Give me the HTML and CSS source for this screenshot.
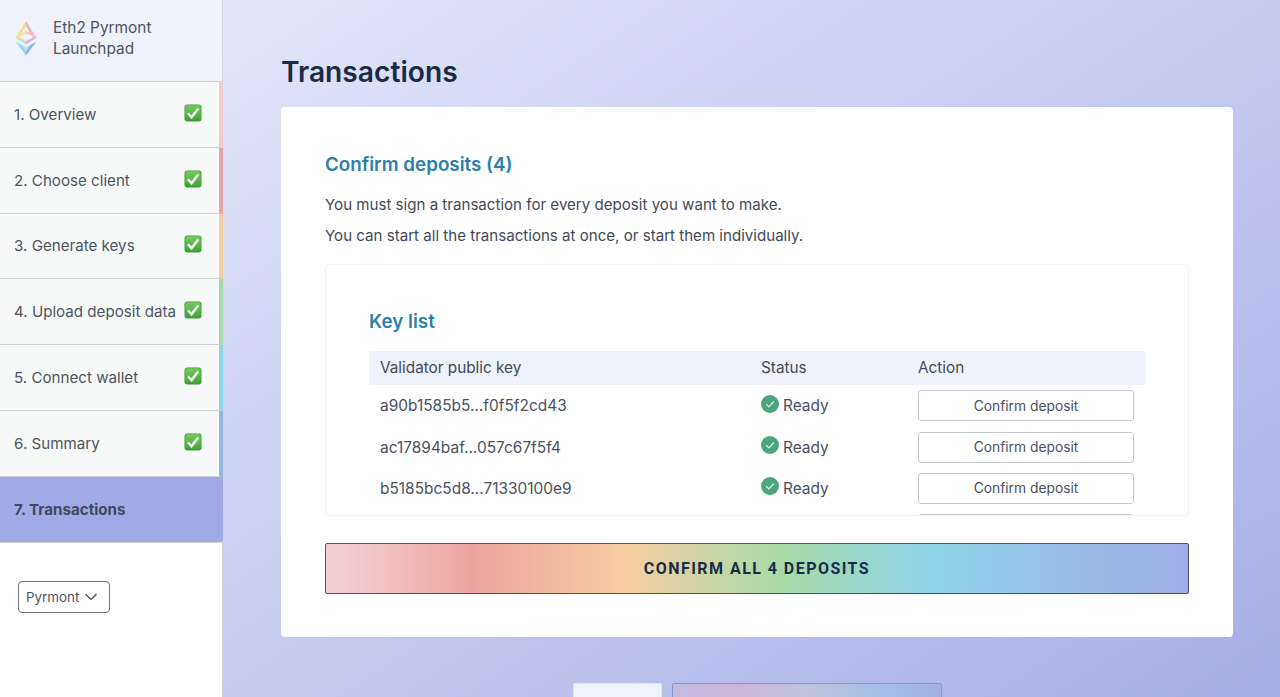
FILE: index.html
```html
<!DOCTYPE html>
<html lang="en">
<head>
<meta charset="utf-8">
<title>Transactions</title>
<link rel="stylesheet" href="styles.css">
</head>
<body>
<svg class="defs" width="0" height="0" aria-hidden="true">
  <defs>
    <linearGradient id="tickfill" x1="0" y1="0" x2="0" y2="1">
      <stop offset="0" stop-color="#74cc5f"/>
      <stop offset="1" stop-color="#43a43a"/>
    </linearGradient>
    <symbol id="tick" viewBox="0 0 18 18">
      <rect x="0.5" y="0.5" width="17" height="17" rx="3" fill="#3f9a37"/>
      <rect x="1.3" y="1.3" width="15.4" height="14.8" rx="2.4" fill="url(#tickfill)"/>
      <path d="M4 9.2l3.5 4L14.2 4.4" fill="none" stroke="#f4f7f2" stroke-width="2.5"/>
    </symbol>
    <symbol id="ready" viewBox="0 0 18 18">
      <circle cx="9" cy="9" r="9" fill="#4ca57d"/>
      <path d="M5.2 9.2l2.7 2.7 5-5.4" fill="none" stroke="#e4f3ec" stroke-width="1.2"/>
    </symbol>
  </defs>
</svg>
<div class="app">
  <aside class="sidebar">
    <header class="brand">
      <svg class="logo" width="24" height="36" viewBox="0 0 24 36" aria-hidden="true">
        <path d="M12 1L1.5 18 12 24.2 22.5 18z" fill="#f4f1f4"/>
        <path d="M12 1L1.5 18 5 17.8 12 6z" fill="#f8dc8c"/>
        <path d="M12 1L22.5 18 19 17.8 12 6z" fill="#f3b6ae"/>
        <path d="M1.5 18L12 13.5V11L3.5 15z" fill="#f7dfa0"/>
        <path d="M22.5 18L12 13.5V11L20.5 15z" fill="#f0c2cf"/>
        <path d="M1.5 18L12 24.2V21L5 17.8z" fill="#bfe3b2"/>
        <path d="M22.5 18L12 24.2V21L19 17.8z" fill="#c8b8ea"/>
        <path d="M1.5 21.5L12 27.6V35.5z" fill="#8fd6ea"/>
        <path d="M22.5 21.5L12 27.6V35.5z" fill="#8fb2ea"/>
        <path d="M7 24.6L12 27.6 17 24.6 12 31.5z" fill="#b4e3ee"/>
      </svg>
      <span class="brand-name">Eth2 Pyrmont<br>Launchpad</span>
    </header>
    <nav class="steps">
      <div class="step step-1"><span>1. Overview</span><svg class="tick"><use href="#tick"/></svg></div>
      <div class="step step-2"><span>2. Choose client</span><svg class="tick"><use href="#tick"/></svg></div>
      <div class="step step-3"><span>3. Generate keys</span><svg class="tick"><use href="#tick"/></svg></div>
      <div class="step step-4"><span>4. Upload deposit data</span><svg class="tick"><use href="#tick"/></svg></div>
      <div class="step step-5"><span>5. Connect wallet</span><svg class="tick"><use href="#tick"/></svg></div>
      <div class="step step-6"><span>6. Summary</span><svg class="tick"><use href="#tick"/></svg></div>
      <div class="step step-active"><span>7. Transactions</span></div>
    </nav>
    <div class="network">
      <span>Pyrmont</span>
      <svg width="14" height="8" viewBox="0 0 14 8" aria-hidden="true"><path d="M1.5 1.2L7 6.4l5.5-5.2" fill="none" stroke="#3f4a5a" stroke-width="1.4"/></svg>
    </div>
  </aside>
  <main class="main">
    <h1 class="title">Transactions</h1>
    <section class="card">
      <h2 class="heading">Confirm deposits (4)</h2>
      <p class="text first">You must sign a transaction for every deposit you want to make.</p>
      <p class="text">You can start all the transactions at once, or start them individually.</p>
      <div class="keybox">
        <h3 class="heading keytitle">Key list</h3>
        <div class="table">
          <div class="row head"><span>Validator public key</span><span>Status</span><span>Action</span></div>
          <div class="row"><span>a90b1585b5...f0f5f2cd43</span><span class="status"><svg class="ready"><use href="#ready"/></svg>Ready</span><button class="confirm">Confirm deposit</button></div>
          <div class="row"><span>ac17894baf...057c67f5f4</span><span class="status"><svg class="ready"><use href="#ready"/></svg>Ready</span><button class="confirm">Confirm deposit</button></div>
          <div class="row"><span>b5185bc5d8...71330100e9</span><span class="status"><svg class="ready"><use href="#ready"/></svg>Ready</span><button class="confirm">Confirm deposit</button></div>
          <div class="row"><span></span><span></span><button class="confirm"></button></div>
        </div>
      </div>
      <button class="all">CONFIRM ALL 4 DEPOSITS</button>
    </section>
    <div class="footer">
      <button class="back"></button>
      <button class="next"></button>
    </div>
  </main>
</div>
</body>
</html>
```
FILE: styles.css
```css
* { box-sizing: border-box; }
html, body { margin: 0; height: 100%; overflow: hidden; }
body { font-family: Inter, "Noto Sans", sans-serif; color: #424a57; background: #fff; }
.defs { position: absolute; }
.app { display: flex; height: 697px; overflow: hidden; }

.sidebar { width: 223px; flex: none; background: #fff; border-right: 1px solid #d0d2da; display: flex; flex-direction: column; }
.brand { height: 82px; flex: none; display: flex; align-items: center; gap: 15px; padding: 0 0 0 14px; background: #eff2f8; border-bottom: 1px solid #cfd1d6; }
.logo { flex: none; margin-top: -5px; }
.brand-name { font-size: 15.4px; line-height: 21px; color: #4c5563; margin-top: -5px; }
.steps { display: flex; flex-direction: column; }
.step { height: 65.8px; display: flex; align-items: center; justify-content: space-between; padding: 0 17px 0 14px; font-size: 15.15px; color: #4e5561; background: #f8f9f9; border-bottom: 1px solid #cfd1d6; border-right: 4px solid; margin-right: -1px; }
.tick { width: 18px; height: 18px; margin-top: -3px; }
.step-1 { border-right-color: #f4ccd0; }
.step-2 { border-right-color: #e8a5a3; }
.step-3 { border-right-color: #f5cd9f; }
.step-4 { border-right-color: #a5dba8; }
.step-5 { border-right-color: #8ed5e8; }
.step-6 { border-right-color: #96b8e4; }
.step-active { background: #a1aae6; font-weight: 700; color: #414866; border-right: 0; }
.network { align-self: flex-start; display: flex; align-items: center; gap: 5px; margin: 38px 0 0 18px; width: 92px; height: 32px; padding: 0 0 0 7px; border: 1px solid #6f7680; border-radius: 4px; font-size: 13.4px; color: #4e5561; }

.main { flex: 1; min-width: 0; padding: 0 47px 0 58px; background: linear-gradient(to bottom right, #e2e6f9 0%, #c5caef 50%, #a7aee6 100%); }
.title { margin: 0; padding-top: 53px; height: 107px; font-size: 28.2px; line-height: 38px; font-weight: 600; color: #1a2b48; }
.card { height: 530px; padding: 45px 44px 0; background: #fff; border-radius: 4px; }
.heading { margin: 0; font-size: 18.8px; line-height: 26px; font-weight: 600; color: #2b7fa8; }
.text { margin: 0; font-size: 15.1px; line-height: 24px; color: #424a5a; padding-top: 7px; }
.text.first { padding-top: 15px; }
.keybox { height: 252px; margin-top: 16px; padding: 44px 43px 0; border: 1px solid #f2f3f6; border-radius: 4px; overflow: hidden; }
.keytitle { margin-bottom: 16px; }
.table { display: flex; flex-direction: column; width: 776px; }
.row { display: grid; grid-template-columns: 381px 157px 216px; align-items: center; height: 41.4px; padding-left: 11px; font-size: 15.45px; color: #4a5262; }
.row.head { height: 34px; padding-bottom: 2px; background: #eff2fa; color: #444a55; font-size: 15.3px; }
.status { display: flex; align-items: center; gap: 4px; }
.ready { width: 18px; height: 18px; margin-top: -4px; }
.confirm { height: 31px; padding: 0; background: #fff; border: 1px solid #c8cacf; border-radius: 3px; font: 13.8px Inter, sans-serif; color: #4a5262; }
.all { display: block; width: 100%; height: 51px; margin-top: 27px; padding: 0; border: 1px solid #48556e; border-radius: 2px; background: linear-gradient(90deg, #f4ced2 2%, #eda4a0 17%, #f5cd9f 35%, #a6dba9 53%, #8ed4e8 70%, #a0ace6 100%); font: 700 16px Roboto, sans-serif; letter-spacing: 1.45px; color: #1a2b48; }

.footer { display: flex; justify-content: center; gap: 10px; margin-top: 46px; }
.back { width: 89px; height: 50px; padding: 0; background: #f0f3f9; border: 1px solid #e2e5f0; border-radius: 2px; }
.next { width: 270px; height: 50px; padding: 0; border: 1px solid #8d95c9; border-radius: 2px; background: linear-gradient(90deg, #c3bce0 0%, #ccb6d6 25%, #c0c4da 50%, #a7bfe6 75%, #a4b0e6 100%); }
```
